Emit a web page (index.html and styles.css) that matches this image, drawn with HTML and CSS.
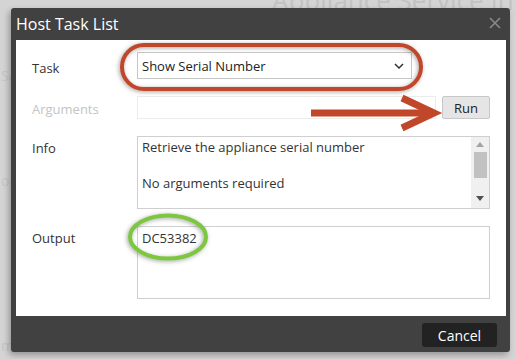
FILE: index.html
```html
<!DOCTYPE html>
<html>
    <head>
        <meta charset="utf-8">
        <title>Host Task List</title>
        <link rel="stylesheet" href="styles.css">
    </head>
    <body>
        <div class="page">
            <div class="page-top">
                <h1 class="page-title">Appliance Service Information</h1>
            </div>
            <div class="page-side">
                <span class="ghost g1">Sa</span>
                <span class="ghost g2">on</span>
                <span class="ghost g3">m</span>
            </div>
        </div>

        <div class="modal">
            <div class="modal-head">
                <span class="modal-title">Host Task List</span>
                <svg class="close" width="12" height="12" viewBox="0 0 12 12"><path d="M1 1L11 11M11 1L1 11" stroke="#8a8a8a" stroke-width="1.6"/></svg>
            </div>
            <div class="modal-body">
                <div class="row">
                    <label class="lbl lbl-task">Task</label>
                    <div class="select">
                        <span>Show Serial Number</span>
                        <svg width="10" height="6" viewBox="0 0 10 6"><path d="M1 1L5 5L9 1" fill="none" stroke="#333" stroke-width="1.5"/></svg>
                    </div>
                </div>
                <div class="row">
                    <label class="lbl lbl-args muted">Arguments</label>
                    <div class="args">
                        <div class="input disabled"></div>
                        <button class="btn-run">Run</button>
                    </div>
                </div>
                <div class="row">
                    <label class="lbl lbl-box">Info</label>
                    <div class="box info">
                        <div class="box-text">Retrieve the appliance serial number<br><br>No arguments required</div>
                        <div class="scroll">
                            <svg width="8" height="5" viewBox="0 0 8 5"><path d="M0 5L4 0L8 5Z" fill="#a3a3a3"/></svg>
                            <div class="thumb"></div>
                            <svg class="down" width="8" height="5" viewBox="0 0 8 5"><path d="M0 0L4 5L8 0Z" fill="#505050"/></svg>
                        </div>
                    </div>
                </div>
                <div class="row">
                    <label class="lbl lbl-box">Output</label>
                    <div class="box output">
                        <div class="box-text">DC53382</div>
                    </div>
                </div>
            </div>
            <div class="modal-foot">
                <button class="btn-cancel">Cancel</button>
            </div>
        </div>

        <!-- annotation marks drawn over the dialog -->
        <svg class="marks" width="516" height="359" viewBox="0 0 516 359">
            <defs>
                <filter id="sh" x="-20%" y="-40%" width="140%" height="180%">
                    <feDropShadow dx="-1" dy="1" stdDeviation="2" flood-color="#555" flood-opacity="0.55"/>
                </filter>
            </defs>
            <rect x="122" y="45" width="299" height="44" rx="22" fill="none" stroke="#c1472b" stroke-width="4" filter="url(#sh)"/>
            <ellipse cx="168" cy="237" rx="38" ry="21.5" fill="none" stroke="#7dc63f" stroke-width="4" filter="url(#sh)"/>
            <path d="M311 113H430" stroke="#c1472b" stroke-width="7"/>
            <path d="M402 98L434 113L402 128" fill="none" stroke="#c1472b" stroke-width="7"/>
        </svg>
    </body>
</html>
```

FILE: styles.css
```css
*{margin:0;padding:0;box-sizing:border-box;}
html,body{height:100%;}
body{background:#d4d4d4;font-family:"Open Sans","Liberation Sans",sans-serif;font-size:13px;color:#333;overflow:hidden;position:relative;}

.page{height:100%;}
.page-top{height:13px;overflow:hidden;padding-left:272px;}
.page-title{font-weight:normal;font-size:26px;line-height:26px;color:#c3c3c3;margin-top:-13px;white-space:nowrap;}
.page-side{display:flex;flex-direction:column;padding-left:1px;font-size:14px;color:#c6c6c6;}
.ghost{display:block;height:20px;}
.g1{margin-top:53px;}
.g2{margin-top:85px;}
.g3{margin-top:145px;}

.modal{position:absolute;left:11px;top:8px;width:499px;height:344px;background:#414141;border-radius:3px;box-shadow:-2px 3px 6px rgba(0,0,0,.3);padding:0 4px 0 5px;display:flex;flex-direction:column;}
.modal-head{height:32px;display:flex;align-items:center;justify-content:space-between;padding:0 3px 0 0;}
.modal-title{color:#fff;font-size:16px;margin-top:-1px;}
.close{margin-right:2px;margin-top:-2px;}

.modal-body{background:#fff;padding:12px 16px 17px 16px;display:flex;flex-direction:column;gap:17px;}
.row{display:grid;grid-template-columns:105px 1fr;align-items:start;}
.lbl{line-height:20px;}
.lbl-task{padding-top:6px;}
.lbl-args{padding-top:3px;}
.lbl-box{padding-top:2px;}
.muted{color:#c4c4c4;}

.select{height:27px;width:275px;border:1px solid #c6c6c6;display:flex;align-items:center;justify-content:space-between;padding:0 7px 0 4px;color:#222;}
.select svg{margin-top:1px;}

.args{display:flex;gap:6px;}
.input{height:23px;width:299px;border:1px solid #ececec;}
.btn-run{height:23px;width:48px;background:#e5e5e5;border:1px solid #c8c8c8;border-radius:2px;font:inherit;color:#222;}

.box{height:73px;width:353px;border:1px solid #cfcfcf;display:flex;}
.box-text{flex:1;padding:1px 4px;line-height:18px;color:#333;}
.scroll{width:18px;background:#f0f0f0;display:flex;flex-direction:column;align-items:center;padding-top:5px;}
.thumb{width:13px;height:26px;background:#c1c1c1;margin-top:5px;}
.down{margin-top:auto;margin-bottom:7px;}
.output .box-text{padding-top:2px;}

.modal-foot{flex:1;display:flex;justify-content:flex-end;padding:7px 9px 0 0;}
.btn-cancel{height:24px;width:75px;background:#222;color:#fff;border:0;border-radius:3px;font:inherit;font-size:14px;}

.marks{position:absolute;left:0;top:0;pointer-events:none;}
```
